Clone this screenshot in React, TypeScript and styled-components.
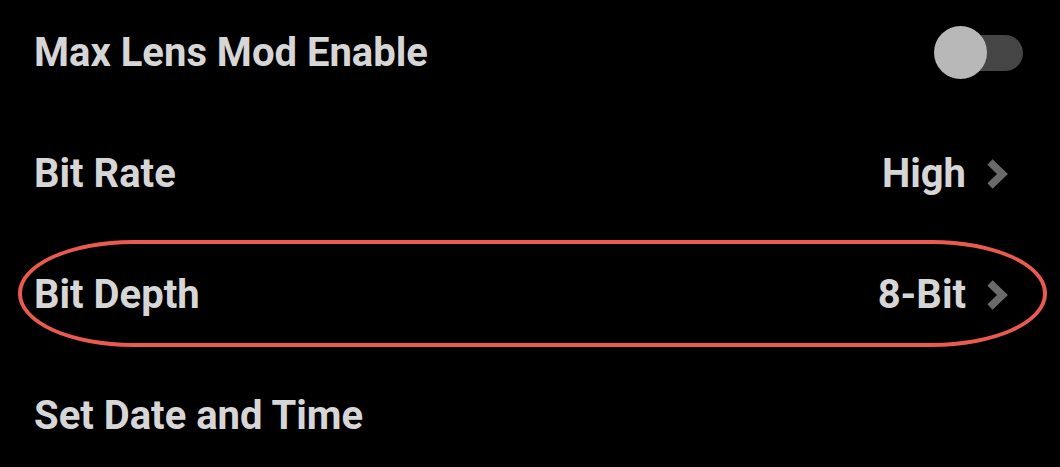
import React from "react";
import styled, { createGlobalStyle } from "styled-components";

const Global = createGlobalStyle`
  html, body { margin: 0; padding: 0; background: #000; }
  body { font-family: Roboto, "Noto Sans", Arial, sans-serif; overflow: hidden; }
`;

const List = styled.div`
  width: 1060px;
  height: 467px;
  display: flex;
  flex-direction: column;
  margin-top: -8px;
`;

const Row = styled.div`
  position: relative;
  height: 121px;
  flex: 0 0 121px;
  display: flex;
  align-items: center;
  justify-content: space-between;
  padding: 0 52px 0 34px;
  box-sizing: border-box;
`;

const Highlight = styled.div`
  position: absolute;
  left: 18px;
  right: 13px;
  top: 6px;
  bottom: 8px;
  border: 4px solid #ea5a51;
  border-radius: 115px / 53px;
  box-sizing: border-box;
  pointer-events: none;
`;

const Label = styled.span`
  font-size: 40px;
  font-weight: 700;
  color: #d6d6d6;
`;

const Value = styled.span`
  display: flex;
  align-items: center;
  gap: 20px;
  font-size: 40px;
  font-weight: 700;
  color: #d6d6d6;
`;

const Chevron = styled.svg`
  width: 22px;
  height: 32px;
  display: block;
`;

const Switch = styled.div`
  position: relative;
  width: 89px;
  height: 54px;
  margin-right: -15px;
`;

const Track = styled.div`
  position: absolute;
  right: 0;
  top: 9px;
  width: 74px;
  height: 36px;
  border-radius: 18px;
  background: #454545;
`;

const Knob = styled.div`
  position: absolute;
  left: 0;
  top: 0;
  width: 53px;
  height: 53px;
  border-radius: 50%;
  background: #b8b8b8;
`;

const Arrow = () => (
  <Chevron viewBox="0 0 22 32">
    <path d="M4 4 L16.5 16 L4 28" fill="none" stroke="#6a6a6a" strokeWidth="7.5" strokeLinejoin="miter" />
  </Chevron>
);

export default function App() {
  return (
    <>
      <Global />
      <List>
        <Row>
          <Label>Max Lens Mod Enable</Label>
          <Switch>
            <Track />
            <Knob />
          </Switch>
        </Row>
        <Row>
          <Label>Bit Rate</Label>
          <Value>
            High
            <Arrow />
          </Value>
        </Row>
        <Row>
          <Highlight />
          <Label>Bit Depth</Label>
          <Value>
            8-Bit
            <Arrow />
          </Value>
        </Row>
        <Row>
          <Label>Set Date and Time</Label>
        </Row>
      </List>
    </>
  );
}
